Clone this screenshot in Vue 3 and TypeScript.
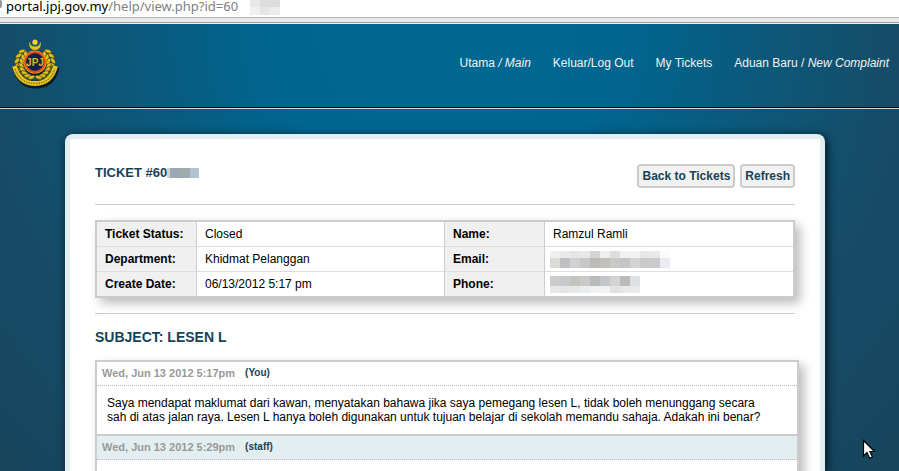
<script setup lang="ts">
interface Block {
  x: number
  y: number
  w: number
  h: number
  c: string
}

interface Message {
  time: string
  author: string
  staff: boolean
  body: string
}

function mosaic(rows: { h: number; colors: string[] }[], size: number): Block[] {
  const out: Block[] = []
  let y = 0
  for (const row of rows) {
    row.colors.forEach((c, i) => out.push({ x: i * size, y, w: size, h: row.h, c: '#' + c }))
    y += row.h
  }
  return out
}

const urlMask = mosaic([
  { h: 7, colors: ['e8e8e8', 'dedede', 'dddddd'] },
  { h: 8, colors: ['f0f0f0', 'e5e5e5', 'ececec'] },
], 10)

const ticketMask: Block[] = [
  { x: 0, y: 0, w: 3, h: 10, c: '#d4d2ce' },
  { x: 3, y: 0, w: 10, h: 10, c: '#9ba8b4' },
  { x: 13, y: 0, w: 10, h: 10, c: '#9eabb0' },
  { x: 23, y: 0, w: 9, h: 10, c: '#b0c4d1' },
]

const emailMask = mosaic([
  { h: 7, colors: 'f0efed e9e9ea e4e5e6 e8e8e8 d6d3d2 eef0ef dedede f0f2f2 f0f2f1 e7e7e7 e9e9e9 fafbff'.split(' ') },
  { h: 10, colors: 'dadad6 c0c0c3 d0d1d4 c7c7c5 bcbab8 c2c0bd c9cac5 c5c5c6 d3d3d4 cacacd cacacd ebecf1'.split(' ') },
], 10)

const phoneMask = mosaic([
  { h: 10, colors: 'cccbca c8c9cb c6c3bc cbcac9 b9bbbd c3c5ca d4d3d2 bbb9ba dce2e4'.split(' ') },
  { h: 7, colors: 'e7e7e7 e4e5e6 e8e8e7 e8edf0 f0f1f1 f1f2f2 e4e2e1 e7e8ea eaeaea'.split(' ') },
], 10)

const leaves = [0, 1, 2, 3, 4, 5, 6, 7].map((i) => {
  const deg = 136 + i * 17
  const a = (deg * Math.PI) / 180
  return {
    x: 23 + 16 * Math.cos(a),
    y: 25 - 16 * Math.sin(a),
    r: 90 - deg,
  }
})

const messages: Message[] = [
  {
    time: 'Wed, Jun 13 2012 5:17pm',
    author: '(You)',
    staff: false,
    body: 'Saya mendapat maklumat dari kawan, menyatakan bahawa jika saya pemegang lesen L, tidak boleh menunggang secara sah di atas jalan raya. Lesen L hanya boleh digunakan untuk tujuan belajar di sekolah memandu sahaja. Adakah ini benar?',
  },
  { time: 'Wed, Jun 13 2012 5:29pm', author: '(staff)', staff: true, body: '' },
]
</script>

<template>
  <div class="window">
    <div class="address">
      <span class="site-mark"></span>
      <span class="url"><span class="host">portal.jpj.gov.my</span>/help/view.php?id=60</span>
      <svg class="url-mask" width="30" height="15" shape-rendering="crispEdges" aria-hidden="true">
        <rect v-for="(b, i) in urlMask" :key="i" :x="b.x" :y="b.y" :width="b.w" :height="b.h" :fill="b.c" />
      </svg>
    </div>
    <div class="chrome-edge"></div>

    <div class="page">
      <header class="top">
        <a href="#" class="logo" aria-label="JPJ">
          <svg width="48" height="50" viewBox="0 0 48 50" aria-hidden="true">
            <path d="M3.5 29 Q8 46.5 24 46.5 Q40 46.5 44.5 29" fill="none" stroke="#0b1a22" stroke-width="6" />
            <circle cx="24" cy="24" r="12.5" fill="#0b1a22" />
            <g fill="#dfc022" stroke="#2b3018" stroke-width=".6">
              <g v-for="(l, i) in leaves" :key="i">
                <g :transform="`translate(${l.x} ${l.y}) rotate(${l.r})`">
                  <ellipse cx="-1" cy="-2" rx="3.6" ry="1.9" transform="rotate(28)" />
                  <ellipse cx="-1" cy="2" rx="3.6" ry="1.9" transform="rotate(-28)" />
                </g>
                <g :transform="`translate(${46 - l.x} ${l.y}) rotate(${-l.r})`">
                  <ellipse cx="1" cy="-2" rx="3.6" ry="1.9" transform="rotate(-28)" />
                  <ellipse cx="1" cy="2" rx="3.6" ry="1.9" transform="rotate(28)" />
                </g>
              </g>
            </g>
            <path d="M17.5 3.5 Q17 10.8 23 10.8 Q29 10.8 28.5 3.5 Q27.5 7.8 23 7.8 Q18.5 7.8 17.5 3.5Z" fill="#e5c51f" stroke="#e5c51f" stroke-width=".5" />
            <circle cx="23" cy="3.2" r="2.6" fill="#f5d516" />
            <path d="M2.5 27 Q7 44.5 23 44.5 Q39 44.5 43.5 27" fill="none" stroke="#2b3018" stroke-width="6" />
            <path d="M2.5 27 Q7 44.5 23 44.5 Q39 44.5 43.5 27" fill="none" stroke="#e5c51f" stroke-width="4.8" />
            <path d="M3 30 Q8 44.5 23 44.5 Q38 44.5 43 30" fill="none" stroke="#857a28" stroke-width="1.4" stroke-dasharray="1.5 1" />
            <circle cx="23" cy="23" r="11.6" fill="#e8c51c" />
            <circle cx="23" cy="23" r="9.9" fill="#14204c" stroke="#f04a1c" stroke-width="2" />
            <text x="23" y="26.5" text-anchor="middle" class="monogram">JPJ</text>
          </svg>
        </a>
        <nav class="nav">
          <a href="#">Utama <em>/ Main</em></a>
          <a href="#">Keluar/Log Out</a>
          <a href="#">My Tickets</a>
          <a href="#">Aduan Baru / <em>New Complaint</em></a>
        </nav>
      </header>

      <div class="content">
        <main class="card">
          <div class="title-row">
            <h1>
              TICKET #60<svg width="32" height="10" shape-rendering="crispEdges" aria-hidden="true">
                <rect v-for="(b, i) in ticketMask" :key="i" :x="b.x" :y="b.y" :width="b.w" :height="b.h" :fill="b.c" />
              </svg>
            </h1>
            <div class="actions">
              <button type="button">Back to Tickets</button>
              <button type="button">Refresh</button>
            </div>
          </div>

          <table class="info">
            <tbody>
              <tr>
                <th scope="row">Ticket Status:</th>
                <td>Closed</td>
                <th scope="row">Name:</th>
                <td>Ramzul Ramli</td>
              </tr>
              <tr>
                <th scope="row">Department:</th>
                <td>Khidmat Pelanggan</td>
                <th scope="row">Email:</th>
                <td class="masked">
                  <svg width="120" height="17" shape-rendering="crispEdges" aria-hidden="true">
                    <rect v-for="(b, i) in emailMask" :key="i" :x="b.x" :y="b.y" :width="b.w" :height="b.h" :fill="b.c" />
                  </svg>
                </td>
              </tr>
              <tr>
                <th scope="row">Create Date:</th>
                <td>06/13/2012 5:17 pm</td>
                <th scope="row">Phone:</th>
                <td class="masked">
                  <svg width="90" height="17" shape-rendering="crispEdges" aria-hidden="true">
                    <rect v-for="(b, i) in phoneMask" :key="i" :x="b.x" :y="b.y" :width="b.w" :height="b.h" :fill="b.c" />
                  </svg>
                </td>
              </tr>
            </tbody>
          </table>

          <h2>SUBJECT: LESEN L</h2>

          <section class="thread">
            <article v-for="m in messages" :key="m.time">
              <header class="msg-head" :class="{ staff: m.staff }">
                <time>{{ m.time }}</time>
                <span class="author">{{ m.author }}</span>
              </header>
              <p>{{ m.body }}</p>
            </article>
          </section>
        </main>
      </div>
    </div>

    <svg class="pointer" width="14" height="22" viewBox="0 0 14 22" aria-hidden="true">
      <path d="M1.5 1.5 V17 L5 13.6 L7.6 19.3 L10.4 18 L8 12.5 H12.5Z" fill="#fff" stroke="#000" stroke-width="1.2" />
    </svg>
  </div>
</template>

<style>
body {
  margin: 0;
  overflow: hidden;
}
</style>

<style scoped>
.window {
  display: flex;
  flex-direction: column;
  height: 100vh;
  overflow: hidden;
  font-family: "Liberation Sans", Arial, sans-serif;
  font-size: 12px;
  line-height: 14px;
  color: #000;
}

.address {
  display: flex;
  flex: none;
  align-items: flex-start;
  height: 17px;
  background: #fff;
}

.site-mark {
  width: 2px;
  height: 8px;
  margin-right: 4px;
  background: #999;
  border-radius: 0 4px 4px 0;
}

.url {
  font-family: "Noto Sans", "Open Sans", sans-serif;
  font-size: 13px;
  line-height: 12px;
  color: #808080;
  white-space: nowrap;
}

.host {
  color: #000;
}

.url-mask {
  margin-left: 12px;
}

.chrome-edge {
  flex: none;
  height: 4px;
  margin-bottom: 1px;
  background: #e8e8e8;
  border-top: 1px solid #b4b4b4;
  border-bottom: 1px solid #a0a0a0;
  box-shadow: 0 1px 0 #eee;
}

.page {
  display: flex;
  flex: 1;
  flex-direction: column;
  min-height: 0;
  background: radial-gradient(circle at 445px 0, #006890 0, #006690 170px, #164c68 450px, #17445a 660px);
}

.top {
  display: flex;
  flex: none;
  align-items: flex-start;
  justify-content: space-between;
  height: 68px;
  padding: 15px 10px 0 12px;
  border-bottom: 1px solid #000;
  box-shadow: 0 1px 0 #d5d5d5;
}

.logo svg {
  display: block;
}

.monogram {
  font-family: "Liberation Sans", Arial, sans-serif;
  font-size: 10px;
  font-weight: bold;
  fill: #d3b72c;
}

.nav {
  display: flex;
  gap: 22px;
  padding-top: 17px;
}

.nav a {
  color: #f2f2f2;
  text-decoration: none;
  white-space: nowrap;
}

.content {
  display: flex;
  flex: 1;
  justify-content: center;
  min-height: 0;
  padding: 26px 9px 0 0;
}

.card {
  box-sizing: border-box;
  width: 760px;
  max-width: 100%;
  padding: 25px 25px 0;
  background: #fff;
  border: 5px solid #e3eef0;
  border-bottom: 0;
  border-radius: 8px 8px 0 0;
  box-shadow: 2px 2px 10px #00121c;
}

.title-row {
  display: flex;
  align-items: flex-start;
  justify-content: space-between;
  height: 40px;
  border-bottom: 1px solid #ccc;
}

h1 {
  display: flex;
  align-items: center;
  margin: 0;
  font-size: 13px;
  line-height: 18px;
  color: #184257;
}

.actions {
  display: flex;
  gap: 5px;
}

button {
  padding: 3px;
  font: bold 12px/14px "Liberation Sans", Arial, sans-serif;
  color: #184257;
  background: #f2f2f2;
  border: 2px solid #ccc;
  border-radius: 4px;
}

.info {
  width: 100%;
  margin: 15px 0;
  table-layout: fixed;
  border: 2px solid #ccc;
  border-spacing: 0;
  box-shadow: 5px 5px 10px #bbb;
  background: #fff;
}

.info th,
.info td {
  box-sizing: border-box;
  height: 25px;
  padding: 0 8px;
  text-align: left;
  border-right: 1px solid #ccc;
  border-bottom: 1px solid #ddd;
}

.info th {
  width: 100px;
  background: #f0f0f0;
}

.info td:last-child {
  border-right: 0;
}

.info tr:last-child > * {
  height: 24px;
  border-bottom: 0;
}

.info .masked {
  padding: 0 5px;
}

.masked svg {
  display: block;
}

h2 {
  margin: 0;
  padding: 15px 0;
  font-size: 14px;
  line-height: 16px;
  color: #184257;
  border-top: 1px solid #ccc;
}

.thread {
  width: 100%;
  border: 2px solid #ccc;
  box-shadow: 5px 5px 10px #bbb;
  background: #fff;
}

article + article {
  min-height: 100px;
  border-top: 2px solid #ccc;
}

.msg-head {
  display: flex;
  gap: 10px;
  height: 23px;
  padding: 0 5px;
  border-bottom: 1px dotted #bbb;
}

.msg-head.staff {
  background: #e3eef0;
}

.msg-head time {
  font-size: 11px;
  font-weight: bold;
  line-height: 23px;
  color: #999;
}

.author {
  font-size: 10px;
  font-weight: bold;
  line-height: 21px;
  color: #184257;
}

article p {
  margin: 0;
  padding: 10px 25px 10px 10px;
}

.pointer {
  position: absolute;
  right: 23px;
  bottom: 10px;
}
</style>
